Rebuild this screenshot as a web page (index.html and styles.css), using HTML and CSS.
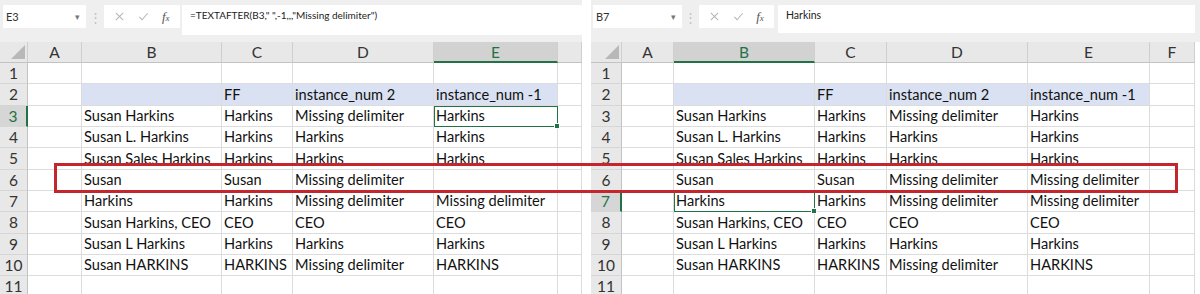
FILE: index.html
```html
<!DOCTYPE html>
<html>
<head>
<meta charset="utf-8">
<link rel="stylesheet" href="styles.css">
</head>
<body>
<div class="screen">
  <section class="panel panel-left">
    <div class="fbar">
      <div class="namebox"><span>E3</span><span class="dd">▾</span></div>
      <div class="dots">⋮</div>
      <div class="tools">
        <svg class="ico" viewBox="0 0 12 12"><path d="M2 2 L10 10 M10 2 L2 10" /></svg>
        <svg class="ico" viewBox="0 0 12 12"><path d="M1.5 6.5 L4.5 9.5 L10.5 2.5" /></svg>
        <span class="fx">f<small>x</small></span>
      </div>
      <div class="formula">=TEXTAFTER(B3," ",-1,,,"Missing delimiter")</div>
    </div>
    <div class="grid">
      <div class="corner"><span class="tri"></span></div><div class="ch">A</div><div class="ch">B</div><div class="ch">C</div><div class="ch">D</div><div class="ch sel">E</div><div class="ch"></div>
      <div class="rh">1</div><div class="c"></div><div class="c"></div><div class="c"></div><div class="c"></div><div class="c"></div><div class="c"></div>
      <div class="rh">2</div><div class="c"></div><div class="c hd"></div><div class="c hd">FF</div><div class="c hd">instance_num 2</div><div class="c hd">instance_num -1</div><div class="c"></div>
      <div class="rh rsel">3</div><div class="c"></div><div class="c">Susan Harkins</div><div class="c">Harkins</div><div class="c">Missing delimiter</div><div class="c act">Harkins<span class="handle"></span></div><div class="c"></div>
      <div class="rh">4</div><div class="c"></div><div class="c">Susan L. Harkins</div><div class="c">Harkins</div><div class="c">Harkins</div><div class="c">Harkins</div><div class="c"></div>
      <div class="rh">5</div><div class="c"></div><div class="c">Susan Sales Harkins</div><div class="c">Harkins</div><div class="c">Harkins</div><div class="c">Harkins</div><div class="c"></div>
      <div class="rh">6</div><div class="c"></div><div class="c">Susan</div><div class="c">Susan</div><div class="c">Missing delimiter</div><div class="c"></div><div class="c"></div>
      <div class="rh">7</div><div class="c"></div><div class="c">Harkins</div><div class="c">Harkins</div><div class="c">Missing delimiter</div><div class="c">Missing delimiter</div><div class="c"></div>
      <div class="rh">8</div><div class="c"></div><div class="c">Susan Harkins, CEO</div><div class="c">CEO</div><div class="c">CEO</div><div class="c">CEO</div><div class="c"></div>
      <div class="rh">9</div><div class="c"></div><div class="c">Susan L Harkins</div><div class="c">Harkins</div><div class="c">Harkins</div><div class="c">Harkins</div><div class="c"></div>
      <div class="rh">10</div><div class="c"></div><div class="c">Susan HARKINS</div><div class="c">HARKINS</div><div class="c">Missing delimiter</div><div class="c">HARKINS</div><div class="c"></div>
      <div class="rh">11</div><div class="c"></div><div class="c"></div><div class="c"></div><div class="c"></div><div class="c"></div><div class="c"></div>
    </div>
  </section>
  <div class="gutter"></div>
  <section class="panel panel-right">
    <div class="fbar">
      <div class="namebox"><span>B7</span><span class="dd">▾</span></div>
      <div class="dots">⋮</div>
      <div class="tools">
        <svg class="ico" viewBox="0 0 12 12"><path d="M2 2 L10 10 M10 2 L2 10" /></svg>
        <svg class="ico" viewBox="0 0 12 12"><path d="M1.5 6.5 L4.5 9.5 L10.5 2.5" /></svg>
        <span class="fx">f<small>x</small></span>
      </div>
      <div class="formula">Harkins</div>
    </div>
    <div class="grid">
      <div class="corner"><span class="tri"></span></div><div class="ch">A</div><div class="ch sel">B</div><div class="ch">C</div><div class="ch">D</div><div class="ch">E</div><div class="ch">F</div>
      <div class="rh">1</div><div class="c"></div><div class="c"></div><div class="c"></div><div class="c"></div><div class="c"></div><div class="c"></div>
      <div class="rh">2</div><div class="c"></div><div class="c hd"></div><div class="c hd">FF</div><div class="c hd">instance_num 2</div><div class="c hd">instance_num -1</div><div class="c"></div>
      <div class="rh">3</div><div class="c"></div><div class="c">Susan Harkins</div><div class="c">Harkins</div><div class="c">Missing delimiter</div><div class="c">Harkins</div><div class="c"></div>
      <div class="rh">4</div><div class="c"></div><div class="c">Susan L. Harkins</div><div class="c">Harkins</div><div class="c">Harkins</div><div class="c">Harkins</div><div class="c"></div>
      <div class="rh">5</div><div class="c"></div><div class="c">Susan Sales Harkins</div><div class="c">Harkins</div><div class="c">Harkins</div><div class="c">Harkins</div><div class="c"></div>
      <div class="rh">6</div><div class="c"></div><div class="c">Susan</div><div class="c">Susan</div><div class="c">Missing delimiter</div><div class="c">Missing delimiter</div><div class="c"></div>
      <div class="rh rsel">7</div><div class="c"></div><div class="c act">Harkins<span class="handle"></span></div><div class="c">Harkins</div><div class="c">Missing delimiter</div><div class="c">Missing delimiter</div><div class="c"></div>
      <div class="rh">8</div><div class="c"></div><div class="c">Susan Harkins, CEO</div><div class="c">CEO</div><div class="c">CEO</div><div class="c">CEO</div><div class="c"></div>
      <div class="rh">9</div><div class="c"></div><div class="c">Susan L Harkins</div><div class="c">Harkins</div><div class="c">Harkins</div><div class="c">Harkins</div><div class="c"></div>
      <div class="rh">10</div><div class="c"></div><div class="c">Susan HARKINS</div><div class="c">HARKINS</div><div class="c">Missing delimiter</div><div class="c">HARKINS</div><div class="c"></div>
      <div class="rh">11</div><div class="c"></div><div class="c"></div><div class="c"></div><div class="c"></div><div class="c"></div><div class="c"></div>
    </div>
  </section>
  <div class="highlight"></div>
</div>
</body>
</html>
```

FILE: styles.css
```css
html, body {
  margin: 0;
  padding: 0;
  background: #ffffff;
}

.screen {
  position: relative;
  display: flex;
  width: 1200px;
  height: 294px;
  overflow: hidden;
  font-family: Lato, "Open Sans", sans-serif;
  color: #111111;
}

.panel-left { width: 582px; flex: none; }
.gutter { width: 9px; flex: none; background: #ffffff; }
.panel-right { width: 609px; flex: none; }

/* formula bar */
.fbar {
  height: 42px;
  box-sizing: border-box;
  background: #efefef;
  display: flex;
  align-items: flex-start;
  padding-top: 5px;
}

.namebox {
  height: 23px;
  background: #ffffff;
  display: flex;
  align-items: center;
  justify-content: space-between;
  box-sizing: border-box;
  padding: 0 6px 0 3px;
  font-size: 11px;
  color: #333;
}
.panel-left .namebox { margin-left: 3px; width: 83px; }
.panel-right .namebox { margin-left: 2px; width: 89px; }

.dd { font-size: 9px; color: #777; }

.dots {
  height: 23px;
  display: flex;
  align-items: center;
  justify-content: center;
  color: #c2c2c2;
  font-size: 13px;
}
.panel-left .dots { width: 18px; }
.panel-right .dots { width: 17px; }

.tools {
  height: 23px;
  width: 76px;
  background: #ffffff;
  display: flex;
  align-items: center;
  justify-content: space-around;
  padding: 0 4px;
  box-sizing: border-box;
}
.panel-right .tools { width: 75px; }

.ico {
  width: 11px;
  height: 11px;
  fill: none;
  stroke: #b5b5b5;
  stroke-width: 1.1;
}

.fx {
  font-family: "Liberation Serif", serif;
  font-style: italic;
  font-size: 13px;
  color: #555;
}
.fx small { font-size: 9px; }

.formula {
  flex: 1;
  background: #ffffff;
  height: 30px;
  box-sizing: border-box;
  padding: 4px 8px 0;
  font-size: 10px;
  color: #222;
  white-space: nowrap;
  overflow: hidden;
}
.panel-left .formula { margin-left: 2px; }
.panel-right .formula { margin-left: 4px; margin-right: 5px; height: 28px; font-size: 10.5px; }

/* grid */
.grid {
  display: grid;
  grid-template-rows: 21px repeat(11, 21.33px);
}
.panel-left .grid { grid-template-columns: 28px 54px 140px 71px 141px 124px 24px; }
.panel-right .grid { grid-template-columns: 31px 52px 141px 72px 141px 122px 45px; width: 604px; }

.corner {
  background: #e8e8e8;
  border-right: 1px solid #cfcfcf;
  border-bottom: 1px solid #c2c2c2;
  box-sizing: border-box;
  position: relative;
}
.tri {
  position: absolute;
  right: 2px;
  bottom: 3px;
  width: 0;
  height: 0;
  border-left: 14px solid transparent;
  border-bottom: 14px solid #b8b8b8;
}

.ch {
  background: #e8e8e8;
  border-right: 1px solid #cfcfcf;
  border-bottom: 1px solid #c2c2c2;
  box-sizing: border-box;
  display: flex;
  align-items: center;
  justify-content: center;
  font-size: 15.5px;
  color: #333333;
}
.ch.sel {
  background: #d2d2d2;
  color: #217346;
  border-bottom: 2px solid #217346;
}

.rh {
  background: #e8e8e8;
  border-right: 1px solid #c2c2c2;
  border-bottom: 1px solid #d6d6d6;
  box-sizing: border-box;
  display: flex;
  align-items: center;
  justify-content: center;
  font-size: 15.5px;
  color: #333333;
}
.rh.rsel {
  background: #d6d6d6;
  color: #217346;
  border-right: 2px solid #217346;
}

.c {
  position: relative;
  border-right: 1px solid #dcdcdc;
  border-bottom: 1px solid #dcdcdc;
  box-sizing: border-box;
  display: flex;
  align-items: flex-end;
  padding: 0 2px 1px;
  font-size: 14.6px;
  line-height: 18px;
  white-space: nowrap;
  overflow: hidden;
}
.c.hd { background: #d9e1f2; }

.c.act {
  overflow: visible;
  outline: 1px solid #217346;
  outline-offset: -1px;
  z-index: 1;
}
.handle {
  position: absolute;
  right: -3px;
  bottom: -3px;
  width: 4px;
  height: 4px;
  background: #217346;
  border: 1px solid #ffffff;
}

/* red highlight frame across both panels */
.highlight {
  position: absolute;
  left: 54px;
  top: 163px;
  width: 1124px;
  height: 30px;
  border: 3px solid #c4262e;
  box-sizing: border-box;
  pointer-events: none;
  z-index: 2;
}
```
